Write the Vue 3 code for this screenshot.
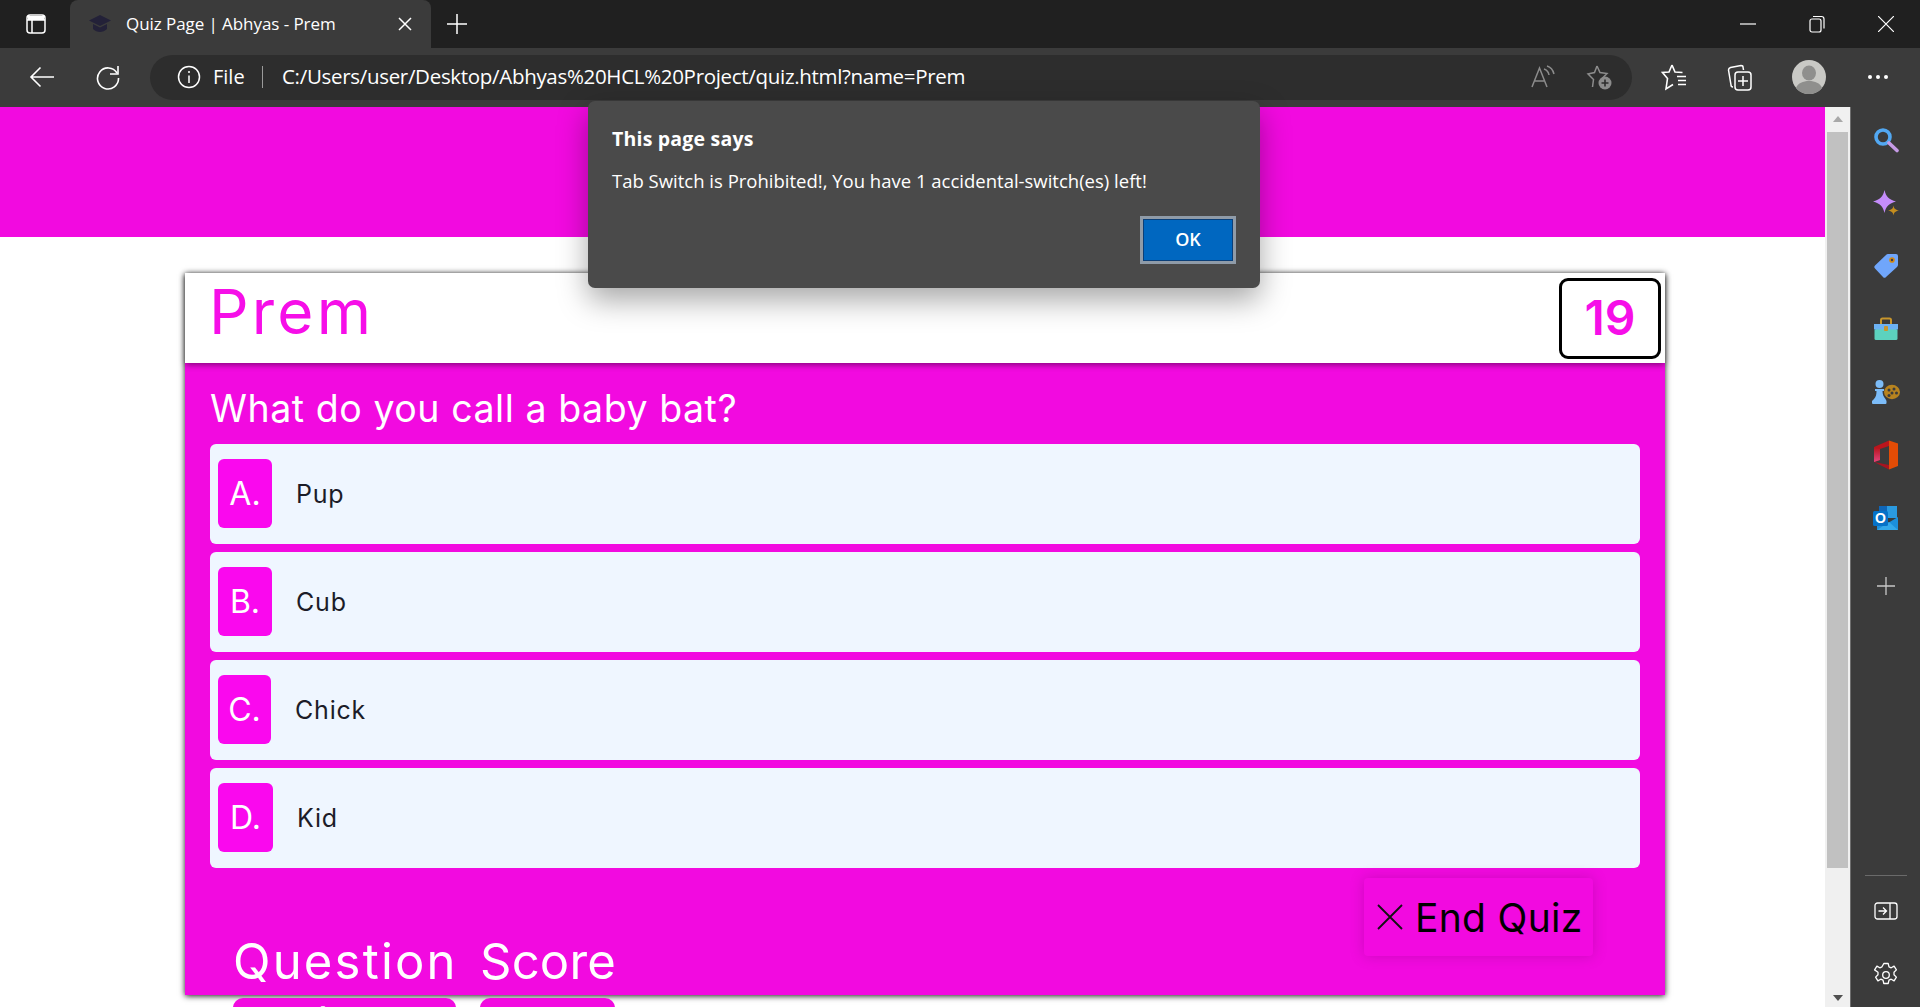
<script setup>
const options = [
  { letter: 'A.', text: 'Pup', width: 54 },
  { letter: 'B.', text: 'Cub', width: 54 },
  { letter: 'C.', text: 'Chick', width: 53 },
  { letter: 'D.', text: 'Kid', width: 55 },
]
</script>

<template>
  <div class="browser">
    <header class="tabstrip">
      <button class="strip-btn tab-toggle" aria-label="Tab actions">
        <svg width="22" height="22" viewBox="0 0 22 22" fill="none" stroke="#fff" stroke-width="1.5">
          <rect x="2" y="2" width="18" height="18" rx="3" />
          <path d="M2 7h18M7 7v13" />
          <path d="M3 3h16v4H3z" fill="#fff" stroke="none" />
        </svg>
      </button>
      <div class="tab">
        <svg class="favicon" width="24" height="20" viewBox="0 0 24 20" fill="#232138">
          <path d="M12 1 1 6.5 12 12l11-5.500z" />
          <path d="M5 10v5c2 2 4.500 3 7 3s5-1 7-3v-5l-7 3.500z" />
        </svg>
        <span class="tab-title">Quiz Page | Abhyas - Prem</span>
        <svg class="tab-close" width="14" height="14" viewBox="0 0 14 14" stroke="#fff" stroke-width="1.500">
          <path d="M1 1l12 12M13 1 1 13" />
        </svg>
      </div>
      <svg class="new-tab" width="22" height="22" viewBox="0 0 22 22" stroke="#fff" stroke-width="1.500">
        <path d="M11 1v20M1 11h20" />
      </svg>
      <div class="window-btns">
        <svg width="16" height="16" viewBox="0 0 16 16" stroke="#fff" stroke-width="1.200"><path d="M0 8h16" /></svg>
        <svg width="16" height="18" viewBox="0 0 16 18" fill="none" stroke="#fff" stroke-width="1.200">
          <rect x="1" y="4" width="11" height="13" rx="2" />
          <path d="M4 1.500h8.500a2.500 2.500 0 0 1 2.500 2.500v9.500" />
        </svg>
        <svg width="16" height="16" viewBox="0 0 16 16" stroke="#fff" stroke-width="1.200"><path d="M0 0l16 16M16 0 0 16" /></svg>
      </div>
    </header>

    <nav class="toolbar">
      <svg class="tool-back" width="26" height="22" viewBox="0 0 26 22" fill="none" stroke="#fff" stroke-width="1.600">
        <path d="M25 11H2M11.500 1.500 2 11l9.500 9.500" />
      </svg>
      <svg class="tool-reload" width="26" height="26" viewBox="0 0 26 26" fill="none" stroke="#fff" stroke-width="1.600">
        <path d="M22 9a10.500 10.500 0 1 0 1.500 5" />
        <path d="M23 2v8h-8" />
      </svg>
      <div class="address">
        <svg class="info" width="24" height="24" viewBox="0 0 24 24" fill="none" stroke="#fff" stroke-width="1.500">
          <circle cx="12" cy="12" r="10.500" />
          <path d="M12 10.500V18M12 6v2" />
        </svg>
        <span class="file">File</span>
        <span class="sep"></span>
        <span class="url">C:/Users/user/Desktop/Abhyas%20HCL%20Project/quiz.html?name=Prem</span>
        <svg class="read" width="26" height="24" viewBox="0 0 26 24" fill="none" stroke="#8c8c8c" stroke-width="1.500">
          <path d="M2 22 9.500 3 17 22M5 16h9" />
          <path d="M14 4c3 1 4.500 3 5 6M17 1c3.500 1 6 4 7 8" />
        </svg>
        <svg class="fav-add" width="28" height="26" viewBox="0 0 28 26" fill="none" stroke="#8c8c8c" stroke-width="1.500">
          <path d="M12 2l3 6.500 7 1-5 5 1.200 2M7.500 23 8.500 15.500 3 10l6.500-1.500L12 2" />
          <circle cx="20" cy="19" r="6.500" fill="#8c8c8c" stroke="none" />
          <path d="M20 15.500v7M16.500 19h7" stroke="#2d2d2d" stroke-width="1.600" />
        </svg>
      </div>
      <svg class="tool-fav" width="26" height="28" viewBox="0 0 26 28" fill="none" stroke="#fff" stroke-width="1.600">
        <path d="M11 2l3 7 7.500.5M16 13.500h9M17 17.500h8M17 21.500h8M11 2 8 9 1.500 9.500l5 6L5 26l7-4.500" />
      </svg>
      <svg class="tool-coll" width="26" height="28" viewBox="0 0 26 28" fill="none" stroke="#fff" stroke-width="1.500">
        <path d="M6 24c-1 0-2-.5-2-2L1.500 7c0-1 .5-2 2-2.500L14 2.500c1 0 2 .5 2 1.500l.5 3" />
        <rect x="8" y="9" width="16" height="18" rx="3" />
        <path d="M16 13v10M11 18h10" />
      </svg>
      <svg class="tool-profile" width="34" height="34" viewBox="0 0 34 34">
        <circle cx="17" cy="17" r="17" fill="#c9c9c5" />
        <ellipse cx="17" cy="13" rx="7" ry="7.500" fill="#8f8f8d" />
        <path d="M4 28c2-5 7-7 13-7s11 2 13 7c-3 4-8 6-13 6S7 32 4 28z" fill="#8f8f8d" />
      </svg>
      <span class="tool-more"><i></i><i></i><i></i></span>
    </nav>

    <div class="viewport">
      <main class="page">
        <div class="banner"></div>
        <section class="card">
          <div class="card-head">
            <h1 class="name">Prem</h1>
            <div class="timer">19</div>
          </div>
          <div class="card-body">
            <h2 class="question">What do you call a baby bat?</h2>
            <ul class="options">
              <li v-for="o in options" :key="o.letter" class="option">
                <span class="badge" :style="{ width: o.width + 'px' }">{{ o.letter }}</span>
                <span class="answer">{{ o.text }}</span>
              </li>
            </ul>
            <div class="actions">
              <button class="end">
                <svg width="26" height="26" viewBox="0 0 26 26" stroke="#111" stroke-width="1.800"><path d="M1 1l24 24M25 1 1 25" /></svg>
                <span>End Quiz</span>
              </button>
            </div>
            <div class="stats">
              <div class="stat stat-q">
                <div class="stat-label">Question</div>
                <div class="stat-value">1/10</div>
              </div>
              <div class="stat stat-s">
                <div class="stat-label">Score</div>
                <div class="stat-value">0</div>
              </div>
            </div>
          </div>
        </section>
      </main>

      <div class="scrollbar">
        <span class="arrow arrow-up"></span>
        <span class="thumb"></span>
        <span class="arrow arrow-down"></span>
      </div>

      <aside class="sidebar">
        <div class="side-icons">
          <span class="side-icon">
            <svg width="26" height="26" viewBox="0 0 26 26" fill="none">
              <circle cx="10" cy="10" r="7" stroke="#52a8f2" stroke-width="3.600" />
              <path d="M16 16l8 7.500" stroke="#c69be6" stroke-width="3.600" stroke-linecap="round" />
            </svg>
          </span>
          <span class="side-icon">
            <svg width="26" height="26" viewBox="0 0 26 26">
              <path d="M11.500 0C12.800 6.500 16 9.500 23 11.500 16 13.500 12.800 16.500 11.500 23 10.200 16.500 7 13.500 0 11.500 7 9.500 10.200 6.500 11.500 0z" fill="#c48cfa" />
              <path d="M20.500 15.500c.5 3 1.500 4.200 5.500 5-4 .8-5 2-5.500 5-.5-3-1.500-4.200-5.500-5 4-.8 5-2 5.500-5z" fill="#c48d1e" />
            </svg>
          </span>
          <span class="side-icon">
            <svg width="26" height="26" viewBox="0 0 26 26">
              <path d="M15 1h8a2 2 0 0 1 2 2v9a3 3 0 0 1-1 2L13 24a2 2 0 0 1-3 0L2 15.500a2 2 0 0 1 0-3L13 2a3 3 0 0 1 2-1z" fill="#70a6fb" />
              <circle cx="19" cy="7" r="2.800" fill="#d58a12" />
              <circle cx="19" cy="7" r="1.200" fill="#3a3a52" />
            </svg>
          </span>
          <span class="side-icon">
            <svg width="26" height="24" viewBox="0 0 26 24">
              <path d="M8 7V3a1.500 1.500 0 0 1 1.500-1.500h7A1.500 1.500 0 0 1 18 3v4" fill="none" stroke="#c8962c" stroke-width="2" />
              <rect x="1.500" y="12" width="23" height="11" rx="1.500" fill="#5cd2be" />
              <path d="M1 7h24v5.500H1z" fill="#6cb2f4" />
              <rect x="11" y="9" width="4" height="5" rx="1" fill="#c8962c" />
            </svg>
          </span>
          <span class="side-icon">
            <svg width="28" height="26" viewBox="0 0 28 26">
              <ellipse cx="20" cy="13" rx="8" ry="7.200" fill="#b7831f" />
              <circle cx="17" cy="11" r="1.500" fill="#3b3b3b" />
              <circle cx="22" cy="10" r="1.500" fill="#3b3b3b" />
              <circle cx="20" cy="14" r="1.500" fill="#3b3b3b" />
              <circle cx="24.500" cy="14" r="1.500" fill="#3b3b3b" />
              <circle cx="17" cy="16.500" r="1.500" fill="#3b3b3b" />
              <circle cx="7.500" cy="5" r="4" fill="#7cbcf8" />
              <path d="M3 10h9v2h-1.500c0 3 1 6 3 8l1 2v2a1 1 0 0 1-1 1H1a1 1 0 0 1-1-1v-2l2-2c2-2 2.500-5 2.500-8H3z" fill="#7cbcf8" />
            </svg>
          </span>
          <span class="side-icon">
            <svg width="26" height="30" viewBox="0 0 26 30">
              <defs>
                <linearGradient id="officeLeft" x1="0" y1="0" x2="0" y2="1">
                  <stop offset="0" stop-color="#b8141c" />
                  <stop offset="1" stop-color="#e2457f" />
                </linearGradient>
              </defs>
              <path d="M16 .5 1 7v15l6-2V9l9-3z" fill="#bb151c" />
              <path d="M1 7.500 7 9v11l-6 2z" fill="url(#officeLeft)" />
              <path d="M1 22l15 7.500V25z" fill="#a81420" />
              <path d="M16 .5l9 3V26l-9 3.500z" fill="#e24c06" />
            </svg>
          </span>
          <span class="side-icon">
            <svg width="26" height="26" viewBox="0 0 26 26">
              <path d="M6 1h18v12H6z" fill="#0f66b8" />
              <path d="M14 1h10v12H14z" fill="#2a9ae0" />
              <path d="M4 12l11 6 10-6v13H4z" fill="#1b8fdc" />
              <path d="M4 25l12-8 9 8z" fill="#33a8ea" />
              <rect x="0" y="6" width="15" height="15" rx="1.500" fill="#0672c8" />
              <text x="7.500" y="18" text-anchor="middle" class="outlook-o">O</text>
            </svg>
          </span>
          <svg class="side-plus" width="18" height="18" viewBox="0 0 18 18" stroke="#c8c8c8" stroke-width="1.300">
            <path d="M9 0v18M0 9h18" />
          </svg>
        </div>
        <div class="side-bottom">
          <span class="side-rule"></span>
          <svg width="24" height="18" viewBox="0 0 24 18" fill="none" stroke="#fff" stroke-width="1.300">
            <rect x="1" y="1" width="22" height="16" rx="2.500" />
            <path d="M16 1v16M4.500 9H12M9 5.500 12.500 9 9 12.500" />
          </svg>
          <svg class="gear" width="26" height="26" viewBox="0 0 26 26" fill="none" stroke="#fff" stroke-width="1.300">
            <circle cx="13" cy="13" r="3.300" />
            <path d="M10.800 1.500h4.400l.8 3.300 2.200 1 2.900-1.700 2.300 3.800-2.400 2.400v2.400l2.400 2.400-2.300 3.800-2.900-1.700-2.200 1-.8 3.300h-4.400l-.8-3.300-2.200-1-2.900 1.700-2.300-3.800 2.400-2.400v-2.400L1.600 7.900l2.300-3.800 2.900 1.700 2.200-1z" stroke-linejoin="round" />
          </svg>
        </div>
      </aside>
    </div>

    <div class="dialog">
      <div class="dialog-title">This page says</div>
      <div class="dialog-msg">Tab Switch is Prohibited!, You have 1 accidental-switch(es) left!</div>
      <div class="dialog-actions">
        <button class="ok">OK</button>
      </div>
    </div>
  </div>
</template>

<style>
html, body { margin: 0; overflow: hidden; }
</style>

<style scoped>
.browser {
  position: relative;
  display: flex;
  flex-direction: column;
  width: 1920px;
  height: 1007px;
  overflow: hidden;
  background: #fff;
  font-family: "Open Sans", "Noto Sans", sans-serif;
}
button { font: inherit; border: 0; background: none; padding: 0; }
svg { display: block; flex: none; }

.tabstrip {
  display: flex;
  align-items: center;
  height: 48px;
  background: #202020;
  flex: none;
}
.tab-toggle { margin-left: 25px; width: 22px; }
.tab {
  display: flex;
  align-items: center;
  align-self: flex-end;
  box-sizing: border-box;
  width: 361px;
  height: 48px;
  margin-left: 23px;
  padding-left: 18px;
  background: #3b3b3b;
  border-radius: 8px 8px 0 0;
}
.tab-title { margin: -2px 0 0 14px; width: 272px; color: #fff; font-size: 17px; letter-spacing: -.07px; white-space: nowrap; }
.new-tab { margin-left: 15px; }
.window-btns { display: flex; align-items: center; gap: 53px; margin-left: auto; margin-right: 26px; }

.toolbar {
  display: flex;
  align-items: center;
  height: 59px;
  padding-bottom: 1px;
  box-sizing: border-box;
  background: #3b3b3b;
  flex: none;
}
.tool-back { margin-left: 29px; }
.tool-reload { margin-left: 40px; }
.address {
  display: flex;
  align-items: center;
  box-sizing: border-box;
  width: 1482px;
  height: 45px;
  margin-left: 29px;
  padding-left: 27px;
  border-radius: 23px;
  background: #2d2d2d;
  color: #fff;
}
.file { margin: -2px 0 0 12px; font-size: 20px; width: 38px; }
.sep { width: 1px; height: 22px; background: #9a9a9a; margin-left: 11px; }
.url { margin: -2px 0 0 19px; font-size: 20.500px; letter-spacing: -.31px; white-space: nowrap; width: 1000px; overflow: hidden; }
.read { margin-left: 248px; }
.fav-add { margin-left: 29px; }
.tool-fav { margin-left: 29px; }
.tool-coll { margin-left: 40px; }
.tool-profile { margin-left: 39px; }
.tool-more { display: flex; gap: 4px; margin-left: 42px; }
.tool-more i { width: 4px; height: 4px; border-radius: 50%; background: #fff; }

.viewport { flex: 1; display: flex; min-height: 0; }
.page { flex: 1; min-width: 0; overflow: hidden; background: #fff; }
.banner { height: 130px; background: #f20ae0; }
.card {
  width: 1480px;
  height: 722px;
  margin: 36px 0 0 185px;
  box-shadow: 0 1px 6px rgba(0, 0, 0, .9);
  font-family: Inter, "Open Sans", sans-serif;
}
.card-head {
  position: relative;
  z-index: 1;
  display: flex;
  align-items: center;
  justify-content: space-between;
  height: 90px;
  padding: 0 4px 0 24px;
  box-sizing: border-box;
  background: #fff;
  box-shadow: 0 2px 6px rgba(0, 0, 0, .45);
}
.name { margin: -12px 0 0; color: #f60ee8; font-size: 62px; font-weight: 400; letter-spacing: 3.200px; line-height: 1; }
.timer {
  width: 102px;
  height: 81px;
  box-sizing: border-box;
  margin-top: 1px;
  padding-bottom: 2px;
  display: flex;
  align-items: center;
  justify-content: center;
  border: 3px solid #000;
  border-radius: 9px;
  color: #f60ee8;
  font-size: 48px;
  font-weight: 600;
}
.card-body { height: 632px; box-sizing: border-box; padding: 0 25px; background: #f20ae0; }
.question { margin: 0; height: 81px; line-height: 91px; color: #fff; font-size: 37.500px; font-weight: 400; letter-spacing: .55px; white-space: nowrap; }
.options { list-style: none; margin: 0; padding: 0; display: flex; flex-direction: column; gap: 8px; }
.option {
  display: flex;
  align-items: center;
  height: 100px;
  padding-left: 8px;
  border-radius: 6px;
  background: #eff6ff;
}
.badge {
  height: 69px;
  margin-top: -1px;
  box-sizing: border-box;
  display: flex;
  align-items: center;
  justify-content: center;
  border-radius: 6px;
  background: #fa08ee;
  color: #fff;
  font-size: 32px;
}
.answer { margin-left: 24px; color: #1c1c28; font-size: 25px; letter-spacing: .8px; }
.actions { display: flex; justify-content: flex-end; margin: 10px 47px -18px 0; }
.end {
  display: flex;
  align-items: center;
  box-sizing: border-box;
  width: 229px;
  height: 78px;
  padding-left: 13px;
  gap: 12px;
  border-radius: 4px;
  background: #f20ae0;
  color: #000;
  font-family: inherit;
  font-size: 39px;
  letter-spacing: .3px;
  white-space: nowrap;
  box-shadow: 0 0 14px rgba(120, 0, 110, .3);
}
.stats { display: flex; gap: 24px; margin-left: 23px; }
.stat-q { width: 223px; }
.stat-s { width: 135px; }
.stat-label { height: 60px; line-height: 48px; text-align: center; color: #fff; font-size: 49px; white-space: nowrap; }
.stat-q .stat-label { letter-spacing: 2.200px; }
.stat-s .stat-label { letter-spacing: .2px; }
.stat-value {
  height: 80px;
  padding-top: 4px;
  box-sizing: border-box;
  border-radius: 10px;
  background: #f20ae0;
  color: #fff;
  text-align: center;
  font-size: 48px;
  line-height: 48px;
}
.stat-q .stat-value { padding-right: 24px; }

.scrollbar {
  display: flex;
  flex-direction: column;
  align-items: center;
  width: 25px;
  background: #f0f0f0;
  flex: none;
}
.arrow { width: 0; height: 0; border-left: 5.500px solid transparent; border-right: 5.500px solid transparent; }
.arrow-up { margin: 9px 0 10px; border-bottom: 6px solid #a8a8a8; }
.thumb { width: 21px; height: 736px; background: #c1c1c1; }
.arrow-down { margin-top: auto; margin-bottom: 6px; border-top: 6px solid #505050; }

.sidebar {
  display: flex;
  flex-direction: column;
  align-items: center;
  justify-content: space-between;
  width: 70px;
  box-sizing: border-box;
  border-left: 1px solid #6e6e6e;
  background: #3b3b3b;
  flex: none;
}
.side-icons {
  display: flex;
  flex-direction: column;
  align-items: center;
  margin-top: 20px;
}
.side-icon { display: flex; align-items: center; justify-content: center; width: 30px; height: 26px; margin-bottom: 37px; }
.side-plus { margin-top: 9px; }
.outlook-o { fill: #fff; font-family: "Liberation Sans", sans-serif; font-size: 14px; font-weight: 700; }
.side-bottom { display: flex; flex-direction: column; align-items: center; padding-bottom: 19px; }
.side-rule { width: 42px; height: 1px; background: #6a6a6a; margin-bottom: 26px; }
.gear { margin-top: 42px; }

.dialog {
  position: absolute;
  z-index: 10;
  left: 588px;
  top: 101px;
  box-sizing: border-box;
  width: 672px;
  height: 187px;
  padding: 28px 24px 0;
  border-radius: 7px;
  background: #4a4a4a;
  color: #fff;
  box-shadow: 0 12px 30px rgba(0, 0, 0, .35);
}
.dialog-title { font-size: 19.500px; font-weight: 700; letter-spacing: .2px; line-height: 20px; }
.dialog-msg { margin-top: 21px; font-size: 18.500px; line-height: 22px; white-space: nowrap; }
.dialog-actions { display: flex; justify-content: flex-end; margin-top: 24px; }
.ok {
  width: 96px;
  height: 48px;
  box-sizing: border-box;
  padding-bottom: 2px;
  border: 3px solid #8f9ba8;
  outline: 1px solid #0b3f78;
  outline-offset: -4px;
  background: #0067c0;
  color: #fff;
  font-family: inherit;
  font-size: 18px;
  font-weight: 600;
}
</style>
